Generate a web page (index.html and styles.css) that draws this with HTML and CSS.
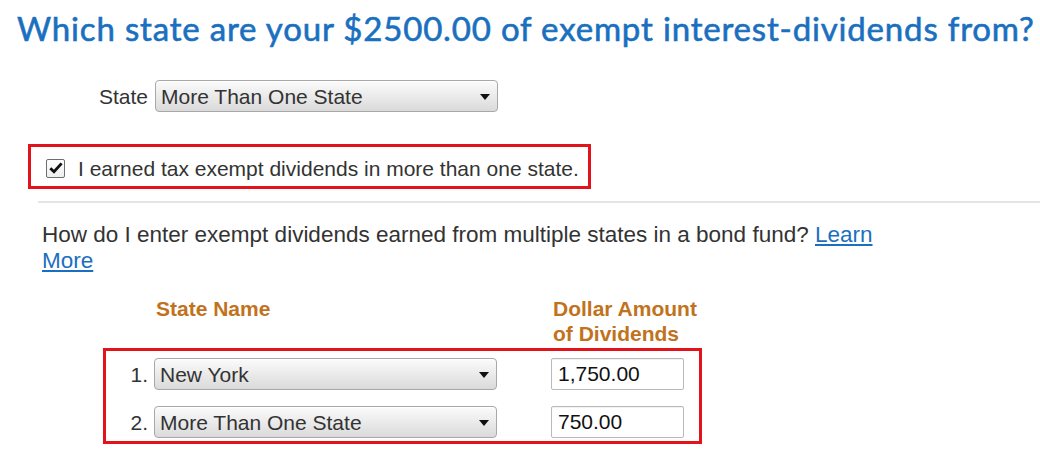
FILE: index.html
```html
<!DOCTYPE html>
<html>
<head>
<meta charset="utf-8">
<link rel="stylesheet" href="styles.css">
</head>
<body>
<div class="page">
  <h1 class="title">Which state are your $2500.00 of exempt interest-dividends from?</h1>

  <div class="state-row">
    <span class="state-label">State</span>
    <div class="select select-main">
      <span class="select-text">More Than One State</span>
      <svg class="arrow" width="10" height="6" viewBox="0 0 10 6"><path d="M0 0H10L5 6Z" fill="#111"/></svg>
    </div>
  </div>

  <div class="check-box">
    <span class="checkbox">
      <svg width="14" height="12" viewBox="0 0 14 12"><path d="M1.3 6.2L5 9.8L12.6 1.4" fill="none" stroke="#111" stroke-width="2.8"/></svg>
    </span>
    <span class="check-label">I earned tax exempt dividends in more than one state.</span>
  </div>

  <div class="divider"></div>

  <p class="help"><span>How do I enter exempt dividends earned from multiple states in a bond fund?</span> <a href="#" class="link"><span>Learn</span> <span>More</span></a></p>

  <div class="table">
    <div class="head-row">
      <span class="col-head col-head-name">State Name</span>
      <span class="col-head col-head-amount">Dollar Amount of Dividends</span>
    </div>
    <div class="rows-box">
      <div class="row">
        <span class="row-num">1.</span>
        <div class="select">
          <span class="select-text">New York</span>
          <svg class="arrow" width="10" height="6" viewBox="0 0 10 6"><path d="M0 0H10L5 6Z" fill="#111"/></svg>
        </div>
        <div class="amount">1,750.00</div>
      </div>
      <div class="row">
        <span class="row-num">2.</span>
        <div class="select">
          <span class="select-text">More Than One State</span>
          <svg class="arrow" width="10" height="6" viewBox="0 0 10 6"><path d="M0 0H10L5 6Z" fill="#111"/></svg>
        </div>
        <div class="amount">750.00</div>
      </div>
    </div>
  </div>
</div>
</body>
</html>
```

FILE: styles.css
```css
html, body {
  margin: 0;
  padding: 0;
  background: #ffffff;
}

.page {
  width: 1040px;
  height: 450px;
  overflow: hidden;
  font-family: "Liberation Sans", Arial, sans-serif;
  color: #333333;
}

.title {
  margin: 8px 0 0 17px;
  font-family: Lato, "Open Sans", sans-serif;
  font-weight: 400;
  font-size: 33px;
  line-height: 40px;
  letter-spacing: 0.82px;
  color: #1a70bf;
  -webkit-text-stroke: 0.6px #1a70bf;
  white-space: nowrap;
}

.state-row {
  display: flex;
  align-items: center;
  margin: 32px 0 0 99px;
  gap: 7px;
}

.state-label {
  font-size: 21px;
  line-height: 25px;
}

.select {
  box-sizing: border-box;
  flex: none;
  width: 343px;
  height: 32px;
  border: 1px solid #a8a8a8;
  border-radius: 4px;
  background: linear-gradient(#fbfbfb, #e9e9e9 55%, #dadada);
  display: flex;
  align-items: center;
  justify-content: space-between;
  padding: 0 7px 0 5px;
  box-shadow: inset 0 1px 0 #ffffff;
}

.select-text {
  font-size: 21px;
  line-height: 25px;
  color: #333333;
}

.arrow {
  display: block;
  margin-top: 1px;
}

.check-box {
  box-sizing: border-box;
  width: 563px;
  height: 45px;
  margin: 32px 0 0 28px;
  border: 3px solid #e3131b;
  display: flex;
  align-items: center;
  padding: 3px 0 0 15px;
}

.checkbox {
  box-sizing: border-box;
  flex: none;
  width: 19px;
  height: 19px;
  border: 1px solid #6e6e6e;
  border-radius: 2px;
  background: linear-gradient(#ffffff, #eeeeee);
  display: flex;
  align-items: center;
  justify-content: center;
  margin-right: 13px;
}

.checkbox svg {
  display: block;
}

.check-label {
  font-size: 21px;
  line-height: 25px;
}

.divider {
  margin: 12px 0 0 38px;
  height: 2px;
  background: #e4e4e4;
}

.help {
  margin: 19px 0 0 42px;
  width: 860px;
  font-size: 22.5px;
  line-height: 26px;
}

.link {
  color: #1a6fbf;
  text-decoration: underline;
}

.table {
  margin: 22px 0 0 103px;
}

.head-row {
  display: flex;
  align-items: flex-start;
  padding-left: 53px;
}

.col-head {
  font-size: 21px;
  line-height: 25px;
  font-weight: 700;
  color: #c1721d;
}

.col-head-name {
  width: 397px;
}

.col-head-amount {
  width: 150px;
}

.rows-box {
  box-sizing: border-box;
  width: 599px;
  margin-top: 2px;
  border: 3px solid #e3131b;
  padding: 7px 0 3px 0;
  display: flex;
  flex-direction: column;
  gap: 16px;
}

.row {
  display: flex;
  align-items: center;
}

.row-num {
  width: 48px;
  box-sizing: border-box;
  font-size: 21px;
  line-height: 25px;
  text-align: right;
  padding-right: 6px;
}

.amount {
  box-sizing: border-box;
  flex: none;
  width: 133px;
  height: 32px;
  margin-left: 54px;
  border: 1px solid #b9b9b9;
  border-radius: 2px;
  background: #ffffff;
  box-shadow: inset 0 1px 1px rgba(0,0,0,0.06);
  font-size: 21px;
  line-height: 30px;
  color: #111111;
  padding-left: 6px;
}
```
